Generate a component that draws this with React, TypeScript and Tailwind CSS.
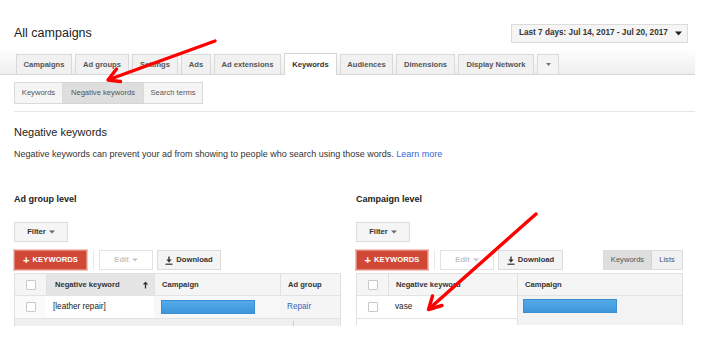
import React from "react";

const Checkbox = () => (
  <div className="w-[10px] h-[10px] bg-white border border-[#c8c8c8] rounded-[1px]" />
);

const Caret = ({ color = "#555" }: { color?: string }) => (
  <svg width="6" height="4" viewBox="0 0 6 4" className="ml-[3px]">
    <path d="M0 0.5 L6 0.5 L3 3.5 Z" fill={color} />
  </svg>
);

const DownloadIcon = () => (
  <svg width="8" height="9" viewBox="0 0 8 9" className="mr-[3px]">
    <path d="M4 0.5 V5.5" stroke="#333" strokeWidth="1.4" />
    <path d="M1.3 3.6 L4 6.4 L6.7 3.6 Z" fill="#333" />
    <rect x="0.5" y="7.6" width="7" height="1.2" fill="#333" />
  </svg>
);

const Toolbar = ({ right }: { right?: boolean }) => (
  <div className="mt-[8px] flex h-[20px] items-center">
    <div
      className={`${right ? "w-[72px]" : "w-[73px]"} h-[20px] flex items-center justify-center bg-[#d14836] border border-[#e3877b] shadow-[0_0_0_1px_#f2c4bd] text-white text-[7.6px] font-bold tracking-[0.1px]`}
    >
      <span className="text-[11px] leading-none mr-[3px] font-bold">+</span>
      KEYWORDS
    </div>
    <div className="ml-[6px] w-px h-[20px] bg-[#e8e8e8]" />
    <div className="ml-[5px] w-[54px] h-[20px] flex items-center justify-center bg-white border border-[#e3e3e3] text-[7.6px] font-bold text-[#c4c4c4]">
      Edit
      <Caret color="#c4c4c4" />
    </div>
    <div
      className={`ml-[4px] ${right ? "w-[65px]" : "w-[64px]"} h-[20px] flex items-center justify-center bg-[#f4f4f4] border border-[#dcdcdc] text-[7.6px] font-bold text-[#333]`}
    >
      <DownloadIcon />
      Download
    </div>
    {right && (
      <div className="ml-auto flex h-[20px] border border-[#dcdcdc] text-[7.6px] text-[#555]">
        <div className="w-[48px] flex items-center justify-center bg-[#dedede] border-r border-[#d4d4d4]">
          Keywords
        </div>
        <div className="w-[30px] flex items-center justify-center bg-[#f1f1f1]">
          Lists
        </div>
      </div>
    )}
  </div>
);

const FilterBtn = () => (
  <div className="mt-[17px] w-[54px] h-[20px] flex items-center justify-center bg-[#f5f5f5] border border-[#dcdcdc] text-[7.6px] font-bold text-[#333]">
    Filter
    <Caret color="#666" />
  </div>
);

const BlueBar = () => (
  <div className="ml-[7px] w-[94px] h-[14px] bg-linear-to-b from-[#55aae8] to-[#3d97dc] border border-[#3a8fd2]" />
);

const LeftTable = () => (
  <div className="mt-[3px] w-[327px] border-x border-t border-[#e0e0e0]">
    <div className="grid grid-cols-[31px_108px_126px_60px] h-[22px] bg-[#f5f5f5] border-b border-[#e3e3e3] text-[7.6px] font-bold text-[#333]">
      <div className="flex items-center justify-center">
        <Checkbox />
      </div>
      <div className="flex items-center justify-between pl-[8px] pr-[5px] bg-[#e5e5e5] border-l border-[#e0e0e0]">
        <span>Negative keyword</span>
        <svg width="7" height="8" viewBox="0 0 7 8">
          <path d="M3.5 7.5 V2" stroke="#333" strokeWidth="1.3" />
          <path d="M0.8 3.6 L3.5 0.6 L6.2 3.6 Z" fill="#333" />
        </svg>
      </div>
      <div className="flex items-center pl-[7px] border-l border-[#e0e0e0]">Campaign</div>
      <div className="flex items-center pl-[7px] border-l border-[#e0e0e0]">Ad group</div>
    </div>
    <div className="grid grid-cols-[31px_108px_126px_60px] h-[23px] border-b border-[#e3e3e3] text-[8.2px] text-[#222]">
      <div className="flex items-center justify-center bg-[#fafafa]">
        <Checkbox />
      </div>
      <div className="flex items-center pl-[7px] bg-white">[leather repair]</div>
      <div className="flex items-center bg-[#f8f8f8]">
        <BlueBar />
      </div>
      <div className="flex items-center pl-[7px] bg-[#f5f5f5] text-[#3b63c4]">Repair</div>
    </div>
    <div className="h-[7px] bg-[#efefef] flex items-end">
      <div className="ml-[278px] w-px h-[5px] bg-[#cfcfcf]" />
    </div>
  </div>
);

const RightTable = () => (
  <div className="mt-[3px] w-[327px] border-x border-t border-[#e0e0e0]">
    <div className="grid grid-cols-[31px_129px_165px] h-[22px] bg-[#f5f5f5] border-b border-[#e3e3e3] text-[7.6px] font-bold text-[#333]">
      <div className="flex items-center justify-center">
        <Checkbox />
      </div>
      <div className="flex items-center pl-[7px] border-l border-[#e0e0e0]">Negative keyword</div>
      <div className="flex items-center pl-[7px] border-l border-[#e0e0e0]">Campaign</div>
    </div>
    <div className="grid grid-cols-[31px_129px_165px] text-[8.2px] text-[#222]">
      <div className="flex flex-col bg-white">
        <div className="h-[23px] flex items-center justify-center border-b border-[#e3e3e3]">
          <Checkbox />
        </div>
        <div className="h-[6px]" />
      </div>
      <div className="flex flex-col bg-white">
        <div className="h-[23px] flex items-center pl-[7px] border-b border-[#e3e3e3]">vase</div>
        <div className="h-[6px]" />
      </div>
      <div className="h-[29px] bg-[#f3f3f3] border-l border-[#e3e3e3] pt-[3px]">
        <div className="-ml-[2px]">
          <BlueBar />
        </div>
      </div>
    </div>
  </div>
);

const tabs: { label: string; w: string; active?: boolean }[] = [
  { label: "Campaigns", w: "w-[56px]" },
  { label: "Ad groups", w: "w-[54px]" },
  { label: "Settings", w: "w-[46px]" },
  { label: "Ads", w: "w-[30px]" },
  { label: "Ad extensions", w: "w-[67px]" },
  { label: "Keywords", w: "w-[53px]", active: true },
  { label: "Audiences", w: "w-[53px]" },
  { label: "Dimensions", w: "w-[59px]" },
  { label: "Display Network", w: "w-[76px]" },
];

export default function App() {
  return (
    <div className="relative w-[719px] h-[343px] overflow-hidden bg-white font-['Liberation_Sans',Arial,sans-serif]">
      {/* Header */}
      <div className="flex items-center justify-between pl-[14px] pr-[31px] pt-[24px]">
        <h1 className="text-[12.5px] leading-[19px] text-[#222]">All campaigns</h1>
        <div className="w-[177px] h-[19px] flex items-center justify-between pl-[7px] pr-[5px] bg-[#f5f5f5] border border-[#dcdcdc] text-[8.2px] font-bold text-[#333]">
          <span>Last 7 days: Jul 14, 2017 - Jul 20, 2017</span>
          <svg width="7" height="5" viewBox="0 0 7 5">
            <path d="M0 0.5 L7 0.5 L3.5 4.5 Z" fill="#222" />
          </svg>
        </div>
      </div>

      {/* Tabs */}
      <div className="mt-[5px] w-[695px] h-[27px] bg-linear-to-b from-white to-[#eeeeee] border-b border-[#d6d6d6] flex items-end gap-[3px] pl-[16px]">
        {tabs.map((t) =>
          t.active ? (
            <div
              key={t.label}
              className={`${t.w} h-[22px] -mb-px relative flex items-center justify-center bg-white border border-b-0 border-[#d6d6d6] text-[7.6px] font-bold text-[#333]`}
            >
              {t.label}
            </div>
          ) : (
            <div
              key={t.label}
              className={`${t.w} h-[20px] flex items-center justify-center bg-[#f1f1f1] border border-b-0 border-[#d9d9d9] text-[7.6px] font-bold text-[#555]`}
            >
              {t.label}
            </div>
          )
        )}
        <div className="w-[22px] h-[20px] flex items-center justify-center bg-[#f4f4f4] border border-b-0 border-[#d9d9d9]">
          <svg width="5" height="3" viewBox="0 0 5 3">
            <path d="M0 0 L5 0 L2.5 3 Z" fill="#777" />
          </svg>
        </div>
      </div>

      {/* Sub tabs */}
      <div className="mt-[7px] ml-[14px] flex h-[22px] w-fit text-[7.6px] text-[#555]">
        <div className="w-[49px] flex items-center justify-center bg-[#f5f5f5] border border-[#dadada]">
          Keywords
        </div>
        <div className="w-[80px] flex items-center justify-center bg-[#dedede] border-y border-[#d4d4d4]">
          Negative keywords
        </div>
        <div className="w-[60px] flex items-center justify-center bg-[#f5f5f5] border border-[#dadada]">
          Search terms
        </div>
      </div>

      <div className="mt-[7px] ml-[14px] w-[681px] h-px bg-[#e6e6e6]" />

      <h2 className="mt-[13px] ml-[14px] text-[11px] leading-[14px] text-[#222]">Negative keywords</h2>
      <p className="mt-[9px] ml-[14px] text-[9px] leading-[12px] text-[#333]">
        Negative keywords can prevent your ad from showing to people who search using those words.{" "}
        <span className="text-[#3367d6]">Learn more</span>
      </p>

      {/* Columns */}
      <div className="mt-[33px] px-[14px] flex gap-[15px]">
        <div className="w-[327px]">
          <h3 className="text-[9px] font-bold leading-[12px] text-[#222]">Ad group level</h3>
          <FilterBtn />
          <Toolbar />
          <LeftTable />
        </div>
        <div className="w-[327px]">
          <h3 className="text-[9px] font-bold leading-[12px] text-[#222]">Campaign level</h3>
          <FilterBtn />
          <Toolbar right />
          <RightTable />
        </div>
      </div>

      {/* Red annotation arrows */}
      <svg className="absolute inset-0 pointer-events-none" width="719" height="343" viewBox="0 0 719 343">
        <g stroke="#ff0000" strokeWidth="3.4" strokeLinecap="round" strokeLinejoin="round" fill="none">
          <path d="M215 41 L109 79.5" />
          <path d="M120.5 81.5 L108 80 L116.5 69" />
          <path d="M536 214 L430 308" />
          <path d="M442 305.5 L428.5 309.5 L432.5 296" />
        </g>
      </svg>
    </div>
  );
}
